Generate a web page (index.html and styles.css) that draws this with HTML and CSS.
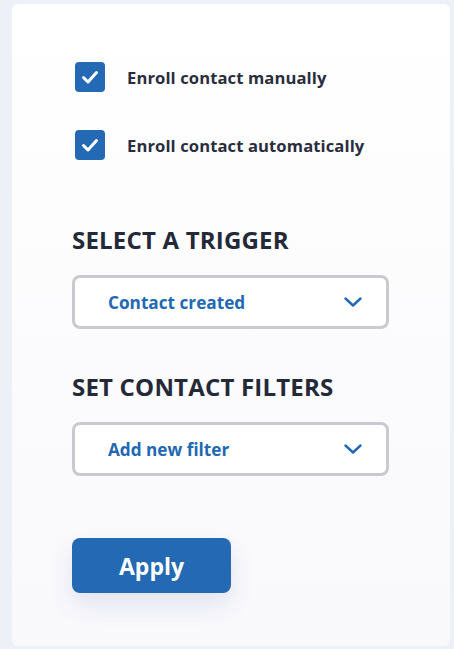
FILE: index.html
```html
<!DOCTYPE html>
<html>
<head>
<meta charset="utf-8">
<link rel="stylesheet" href="styles.css">
</head>
<body>
<div class="card">
  <div class="checks">
    <label class="check">
      <span class="box"><svg viewBox="0 0 30 30" width="30" height="30"><path d="M8.5 15.5 L13 20 L21.5 10.5" fill="none" stroke="#fff" stroke-width="3" stroke-linecap="round" stroke-linejoin="round"/></svg></span>
      <span class="check-label">Enroll contact manually</span>
    </label>
    <label class="check">
      <span class="box"><svg viewBox="0 0 30 30" width="30" height="30"><path d="M8.5 15.5 L13 20 L21.5 10.5" fill="none" stroke="#fff" stroke-width="3" stroke-linecap="round" stroke-linejoin="round"/></svg></span>
      <span class="check-label">Enroll contact automatically</span>
    </label>
  </div>
  <h2 class="heading first">SELECT A TRIGGER</h2>
  <div class="select">
    <span class="select-text">Contact created</span>
    <svg class="chev" viewBox="0 0 18 10" width="18" height="10"><path d="M1.5 1.5 L9 8.5 L16.5 1.5" fill="none" stroke="#2268b4" stroke-width="2.4" stroke-linecap="round" stroke-linejoin="round"/></svg>
  </div>
  <h2 class="heading">SET CONTACT FILTERS</h2>
  <div class="select">
    <span class="select-text">Add new filter</span>
    <svg class="chev" viewBox="0 0 18 10" width="18" height="10"><path d="M1.5 1.5 L9 8.5 L16.5 1.5" fill="none" stroke="#2268b4" stroke-width="2.4" stroke-linecap="round" stroke-linejoin="round"/></svg>
  </div>
  <button class="apply">Apply</button>
</div>
</body>
</html>
```
FILE: styles.css
```css
html, body {
  margin: 0;
  padding: 0;
}
body {
  background: #eef0f7;
  font-family: "Open Sans", "Noto Sans", sans-serif;
  padding: 4px 4px 3px 12px;
  box-sizing: border-box;
  height: 649px;
}
.card {
  box-sizing: border-box;
  width: 438px;
  height: 642px;
  background: linear-gradient(180deg, #ffffff 0%, #fbfbfd 60%, #f9f9fc 100%);
  border-radius: 6px;
  padding: 58px 0 0 60px;
  display: flex;
  flex-direction: column;
  align-items: flex-start;
}
.checks {
  display: flex;
  flex-direction: column;
  gap: 38px;
  padding-left: 3px;
}
.check {
  display: flex;
  align-items: center;
  gap: 22px;
}
.box {
  width: 30px;
  height: 30px;
  background: #2469b3;
  border-radius: 4px;
  display: block;
}
.box svg { display: block; }
.check-label {
  font-size: 16.6px;
  font-weight: 700;
  color: #2a2d3e;
  letter-spacing: 0.1px;
}
.heading {
  margin: 0;
  font-size: 24px;
  font-weight: 700;
  color: #242938;
  line-height: 28px;
  letter-spacing: 0.2px;
}
.heading.first { margin-top: 66px; }
.heading:not(.first) { margin-top: 44px; }
.select {
  box-sizing: border-box;
  margin-top: 21px;
  width: 317px;
  height: 54px;
  border: 3px solid #c9cacf;
  border-radius: 8px;
  background: #fff;
  display: flex;
  align-items: center;
  justify-content: space-between;
  padding: 0 24px 0 33px;
}
.select-text {
  font-size: 17.2px;
  font-weight: 700;
  color: #2268b4;
}
.chev { display: block; }
.apply {
  margin-top: 62px;
  width: 159px;
  height: 55px;
  border: none;
  border-radius: 8px;
  background: #2469b3;
  color: #fff;
  font-family: inherit;
  font-size: 23px;
  font-weight: 700;
  box-shadow: 0 12px 24px rgba(60, 70, 140, 0.12);
  padding: 0;
}
```
